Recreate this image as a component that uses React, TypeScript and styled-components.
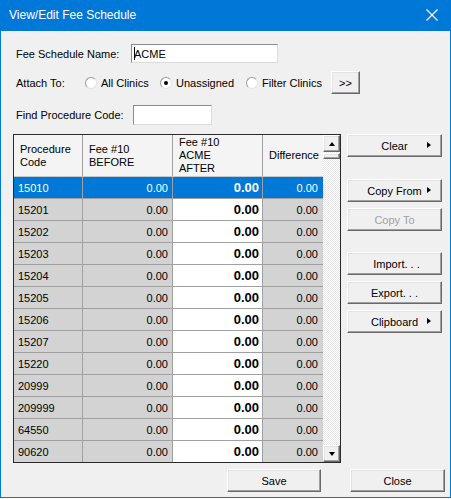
import React from "react";
import styled, { createGlobalStyle, css } from "styled-components";

const Global = createGlobalStyle`
  html, body { margin: 0; padding: 0; background: #ffffff; }
  * { box-sizing: border-box; }
  body { font-family: "Liberation Sans", Arial, sans-serif; font-size: 11px; color: #000; }
`;

const Window = styled.div`
  width: 451px;
  height: 498px;
  border: 1px solid #0078d7;
  border-top: none;
  background: #f0f0f0;
  display: flex;
  flex-direction: column;
`;

const TitleBar = styled.div`
  height: 31px;
  margin: 0 -1px;
  background: #0078d7;
  color: #fff;
  display: flex;
  align-items: center;
  justify-content: space-between;
  padding: 0 9px 1px 9px;
  font-size: 12px;
  font-family: "Segoe UI", "Liberation Sans", Arial, sans-serif;
`;

const CloseX = styled.svg`
  width: 12px;
  height: 12px;
  margin-right: 4px;
`;

const Body = styled.div`
  flex: 1;
  display: flex;
  flex-direction: column;
  padding: 13px 0 5px 12px;
`;

const FormRow = styled.div<{ $h: number; $mt?: number }>`
  display: flex;
  align-items: center;
  height: ${(p) => p.$h}px;
  margin-top: ${(p) => p.$mt ?? 0}px;
  padding-left: 3px;
`;

const Label = styled.span<{ $w: number }>`
  width: ${(p) => p.$w}px;
  flex: none;
  white-space: nowrap;
`;

const TextBox = styled.div<{ $w: number; $h: number }>`
  width: ${(p) => p.$w}px;
  height: ${(p) => p.$h}px;
  background: #fff;
  border: 1px solid;
  border-color: #8c8c8c #dcdcdc #dcdcdc #8c8c8c;
  display: flex;
  align-items: center;
  padding-left: 2px;
  font-size: 11px;
`;

const Caret = styled.span`
  display: inline-block;
  width: 1px;
  height: 13px;
  background: #000;
  margin-right: -1px;
`;

const RadioOption = styled.label<{ $w: number }>`
  width: ${(p) => p.$w}px;
  flex: none;
  display: flex;
  align-items: center;
  gap: 4px;
  white-space: nowrap;
  overflow: hidden;
`;

const RadioCircle = styled.span<{ $on?: boolean }>`
  width: 12px;
  height: 12px;
  border-radius: 50%;
  background: #fff;
  border: 1px solid;
  border-color: #9a9a9a #e4e4e4 #e4e4e4 #9a9a9a;
  display: flex;
  align-items: center;
  justify-content: center;
  flex: none;
  &::after {
    content: "";
    width: 4px;
    height: 4px;
    border-radius: 50%;
    background: ${(p) => (p.$on ? "#000" : "transparent")};
  }
`;

const raised = css`
  background: #f0f0f0;
  border: 1px solid;
  border-color: #ffffff #696969 #696969 #ffffff;
  box-shadow: inset -1px -1px 0 #a0a0a0, inset 1px 1px 0 #e3e3e3;
`;

const Button = styled.div<{ $w: number; $shift?: number; $disabled?: boolean }>`
  ${raised};
  position: relative;
  width: ${(p) => p.$w}px;
  height: 23px;
  flex: none;
  display: flex;
  align-items: center;
  justify-content: center;
  padding-left: ${(p) => p.$shift ?? 0}px;
  color: ${(p) => (p.$disabled ? "#a0a0a0" : "#000")};
  white-space: nowrap;
`;

const Arrow = styled.span`
  position: absolute;
  right: 10px;
  top: 7px;
  width: 0;
  height: 0;
  border-top: 3.5px solid transparent;
  border-bottom: 3.5px solid transparent;
  border-left: 4px solid #000;
`;

const MainRow = styled.div`
  display: flex;
  margin-top: 9px;
`;

const Grid = styled.div`
  width: 328px;
  height: 329px;
  border: 1px solid #2a2a2a;
  display: flex;
  background: #fff;
`;

const Table = styled.div`
  width: 309px;
  display: flex;
  flex-direction: column;
`;

const HeaderRow = styled.div`
  display: grid;
  grid-template-columns: 69px 90px 90px 60px;
  height: 42px;
  background: #f4f4f4;
  border-bottom: 1px solid #c8c8c8;
`;

const HeaderCell = styled.div<{ $last?: boolean }>`
  display: flex;
  align-items: center;
  padding-left: 6px;
  line-height: 13px;
  border-right: ${(p) => (p.$last ? "none" : "1px solid #a0a0a0")};
  white-space: pre-line;
`;

const Rows = styled.div`
  height: 285px;
  overflow: hidden;
`;

const Row = styled.div`
  display: grid;
  grid-template-columns: 69px 90px 90px 60px;
  height: 22px;
  border-bottom: 1px solid #a0a0a0;
`;

const Cell = styled.div<{
  $sel?: boolean;
  $white?: boolean;
  $bold?: boolean;
  $right?: boolean;
  $last?: boolean;
  $pr?: number;
}>`
  display: flex;
  align-items: center;
  justify-content: ${(p) => (p.$right ? "flex-end" : "flex-start")};
  padding-left: 4px;
  padding-right: ${(p) => p.$pr ?? 4}px;
  background: ${(p) => (p.$sel ? "#0078d7" : p.$white ? "#ffffff" : "#d3d3d3")};
  color: ${(p) => (p.$sel ? "#fff" : "#000")};
  font-weight: ${(p) => (p.$bold ? 700 : 400)};
  font-size: ${(p) => (p.$bold ? 13 : 11)}px;
  border-right: ${(p) => (p.$last ? "none" : "1px solid #a0a0a0")};
`;

const ScrollBar = styled.div`
  width: 17px;
  display: flex;
  flex-direction: column;
  background: repeating-conic-gradient(#ffffff 0 25%, #e6e6e6 0 50%) 0 0 / 2px 2px;
`;

const ScrollBtn = styled.div`
  ${raised};
  height: 17px;
  display: flex;
  align-items: center;
  justify-content: center;
`;

const Thumb = styled.div`
  ${raised};
  height: 6px;
  margin-top: 1px;
`;

const Track = styled.div`
  flex: 1;
`;

const Tri = styled.span<{ $down?: boolean }>`
  width: 0;
  height: 0;
  border-left: 3.5px solid transparent;
  border-right: 3.5px solid transparent;
  ${(p) =>
    p.$down
      ? css`border-top: 4px solid #000;`
      : css`border-bottom: 4px solid #000;`}
`;

const SideButtons = styled.div`
  display: flex;
  flex-direction: column;
  margin-left: 6px;
`;

const Spacer = styled.div<{ $h: number }>`
  height: ${(p) => p.$h}px;
`;

const BottomBar = styled.div`
  display: flex;
  justify-content: flex-end;
  gap: 29px;
  margin-top: 6px;
  padding-right: 5px;
`;

const codes = [
  "15010",
  "15201",
  "15202",
  "15203",
  "15204",
  "15205",
  "15206",
  "15207",
  "15220",
  "20999",
  "209999",
  "64550",
  "90620",
];

export default function App() {
  return (
    <>
      <Global />
      <Window>
        <TitleBar>
          <span>View/Edit Fee Schedule</span>
          <CloseX viewBox="0 0 12 12">
            <path d="M0.5 0.5 L11.5 11.5 M11.5 0.5 L0.5 11.5" stroke="#fff" strokeWidth="1.2" />
          </CloseX>
        </TitleBar>
        <Body>
          <FormRow $h={19}>
            <Label $w={115}>Fee Schedule Name:</Label>
            <TextBox $w={147} $h={19}>
              <Caret />
              ACME
            </TextBox>
          </FormRow>
          <FormRow $h={23} $mt={8}>
            <Label $w={69}>Attach To:</Label>
            <RadioOption $w={75}>
              <RadioCircle />
              All Clinics
            </RadioOption>
            <RadioOption $w={86}>
              <RadioCircle $on />
              Unassigned
            </RadioOption>
            <RadioOption $w={85}>
              <RadioCircle />
              Filter Clinics
            </RadioOption>
            <Button $w={29}>&gt;&gt;</Button>
          </FormRow>
          <FormRow $h={20} $mt={11}>
            <Label $w={117}>Find Procedure Code:</Label>
            <TextBox $w={79} $h={20} />
          </FormRow>
          <MainRow>
            <Grid>
              <Table>
                <HeaderRow>
                  <HeaderCell>{"Procedure\nCode"}</HeaderCell>
                  <HeaderCell>{"Fee #10\nBEFORE"}</HeaderCell>
                  <HeaderCell>{"Fee #10\nACME\nAFTER"}</HeaderCell>
                  <HeaderCell $last>Difference</HeaderCell>
                </HeaderRow>
                <Rows>
                  {codes.map((c, i) => (
                    <Row key={c}>
                      <Cell $sel={i === 0}>{c}</Cell>
                      <Cell $sel={i === 0} $right>
                        0.00
                      </Cell>
                      <Cell $sel={i === 0} $white $bold $right $pr={3}>
                        0.00
                      </Cell>
                      <Cell $sel={i === 0} $right $last $pr={5}>
                        0.00
                      </Cell>
                    </Row>
                  ))}
                </Rows>
              </Table>
              <ScrollBar>
                <ScrollBtn>
                  <Tri />
                </ScrollBtn>
                <Thumb />
                <Track />
                <ScrollBtn>
                  <Tri $down />
                </ScrollBtn>
              </ScrollBar>
            </Grid>
            <SideButtons>
              <Button $w={95}>
                Clear
                <Arrow />
              </Button>
              <Spacer $h={22} />
              <Button $w={95}>
                Copy From
                <Arrow />
              </Button>
              <Spacer $h={6} />
              <Button $w={95} $disabled>
                Copy To
              </Button>
              <Spacer $h={21} />
              <Button $w={95} $shift={4}>
                Import. . .
              </Button>
              <Spacer $h={6} />
              <Button $w={95}>Export. . .</Button>
              <Spacer $h={6} />
              <Button $w={95}>
                Clipboard
                <Arrow />
              </Button>
            </SideButtons>
          </MainRow>
          <BottomBar>
            <Button $w={94}>Save</Button>
            <Button $w={95}>Close</Button>
          </BottomBar>
        </Body>
      </Window>
    </>
  );
}
